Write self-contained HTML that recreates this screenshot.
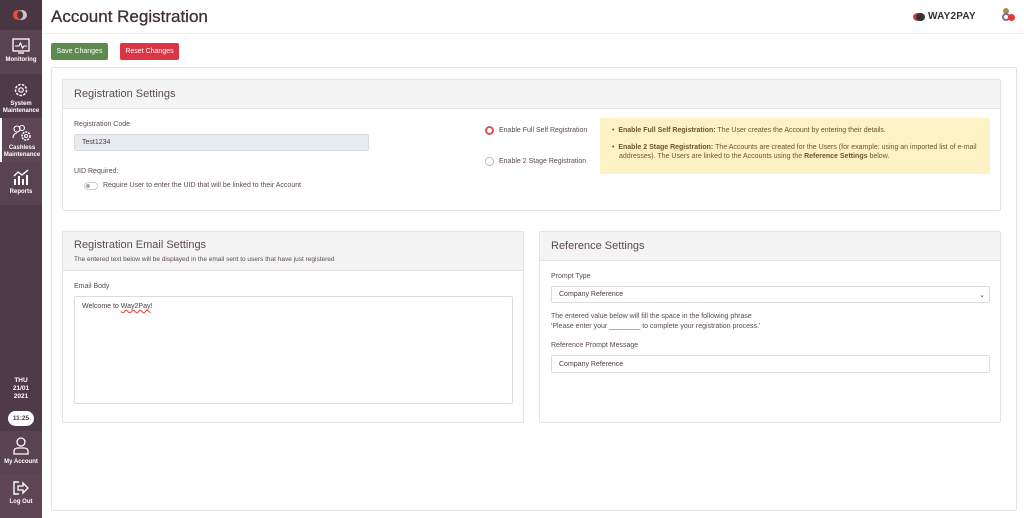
<!DOCTYPE html>
<html><head><style>
*{box-sizing:border-box;margin:0;padding:0}
body{width:1024px;height:518px;overflow:hidden;background:#fff;font-family:"Liberation Sans",sans-serif;color:#5a4a52;position:relative}
.sb{position:absolute;left:0;top:0;width:42px;height:518px;background:#4f3a47}
.it{position:absolute;left:0;width:42px;text-align:center;color:#fff;font-size:6px;font-weight:bold;line-height:7px}
.it svg{display:block;margin:0 auto 3px}
.abs{position:absolute}
.card{position:absolute;border:1px solid #e3e3e3;border-radius:2px;background:#fff}
.ch{background:#f4f4f4;border-bottom:1px solid #e3e3e3;padding:0 11px}
.ch h2{font-size:11px;font-weight:normal;color:#5a4a52}
.lbl{position:absolute;font-size:7px;color:#5a4a52}
.inp{position:absolute;border:1px solid #dcdcdc;border-radius:2px;font-size:7px;padding-left:7px;display:flex;align-items:center;color:#4a3a42}
</style></head><body>
<div class="sb">
 <div class="abs" style="left:0;top:0;width:42px;height:30px;background:#4a3542"></div>
 <div class="abs" style="left:13px;top:10px;width:14px;height:10px;">
  <div class="abs" style="left:0;top:0;width:10px;height:10px;border-radius:50%;background:#e8503a"></div>
  <div class="abs" style="left:4px;top:0;width:10px;height:10px;border-radius:50%;background:#ddd;opacity:.85"></div>
  <div class="abs" style="left:4px;top:1px;width:6px;height:8px;border-radius:50%;background:#4a3542"></div>
 </div>
 <div class="it" style="top:30px;height:44px;background:#5a4350;padding-top:8px"><svg width="18" height="16" viewBox="0 0 18 16"><rect x="1" y="1" width="16" height="12" fill="none" stroke="#fff" stroke-width="1.3"/><path d="M3 8h4l1.5-3 2 5 1.5-2H15" fill="none" stroke="#fff" stroke-width="1.1"/><path d="M6 15h6" stroke="#fff" stroke-width="1.3"/></svg>Monitoring</div>
 <div class="it" style="top:74px;height:44px;background:#4f3a47;padding-top:8px"><svg width="16" height="16" viewBox="0 0 16 16"><circle cx="8" cy="8" r="5.5" fill="none" stroke="#fff" stroke-width="1.5" stroke-dasharray="2.5 1.3"/><circle cx="8" cy="8" r="2.2" fill="none" stroke="#fff" stroke-width="1.2"/></svg>System<br>Maintenance</div>
 <div class="it" style="top:118px;height:44px;background:#5e4654;padding-top:6px;border-left:2px solid #fff"><svg width="20" height="18" viewBox="0 0 20 18"><circle cx="5" cy="5" r="3" fill="none" stroke="#fff" stroke-width="1.1"/><circle cx="10" cy="4" r="2.5" fill="none" stroke="#fff" stroke-width="1.1"/><circle cx="14" cy="12" r="4" fill="none" stroke="#fff" stroke-width="1.5" stroke-dasharray="2 1"/><circle cx="14" cy="12" r="1.5" fill="none" stroke="#fff"/><path d="M1 14c0-3 2-5 4-5" fill="none" stroke="#fff" stroke-width="1.1"/></svg>Cashless<br>Maintenance</div>
 <div class="it" style="top:162px;height:43px;background:#5a4350;padding-top:6px"><svg width="18" height="18" viewBox="0 0 18 18"><path d="M2 8l4-4 4 3 6-5" fill="none" stroke="#fff" stroke-width="1.4"/><rect x="2" y="11" width="2" height="6" fill="#fff"/><rect x="6" y="8" width="2" height="9" fill="#fff"/><rect x="10" y="11" width="2" height="6" fill="#fff"/><rect x="14" y="7" width="2" height="10" fill="#fff"/></svg>Reports</div>
 <div class="it" style="top:377px;font-size:6.5px;line-height:8px">THU<br>21/01<br>2021</div>
 <div class="abs" style="left:8px;top:411px;width:26px;height:15px;background:#fff;border-radius:8px;font-size:6.5px;font-weight:bold;color:#4a3542;text-align:center;line-height:15px">11:25</div>
 <div class="it" style="top:431px;height:42px;background:#5a4350;padding-top:5px"><svg width="18" height="20" viewBox="0 0 18 20"><circle cx="9" cy="6" r="4" fill="none" stroke="#fff" stroke-width="1.3"/><path d="M2 18v-3c0-2 2-3 4-3h6c2 0 4 1 4 3v3z" fill="none" stroke="#fff" stroke-width="1.3"/></svg>My Account</div>
 <div class="it" style="top:473px;height:45px;background:#5e4654;padding-top:7px"><svg width="18" height="16" viewBox="0 0 18 16"><path d="M7 2H2v12h5" fill="none" stroke="#fff" stroke-width="1.4"/><path d="M6 6h5V3l5 5-5 5v-3H6z" fill="none" stroke="#fff" stroke-width="1.3"/></svg>Log Out</div>
</div>

<div class="abs" style="left:51px;top:7px;font-size:17px;color:#3f3038;-webkit-text-stroke:0.3px #3f3038">Account Registration</div>
<div class="abs" style="left:42px;top:33px;width:982px;border-top:1px solid #f0f0f0"></div>
<div class="abs" style="left:913px;top:13px;width:10px;height:8px;border-radius:50%;background:#d33"></div>
<div class="abs" style="left:916px;top:13px;width:9px;height:8px;border-radius:50%;background:#333"></div>
<div class="abs" style="left:928px;top:11px;font-size:10px;font-weight:bold;color:#333;letter-spacing:.2px">WAY2PAY</div>
<div class="abs" style="left:1003px;top:8px;width:6px;height:6px;border-radius:50%;background:#a85"></div>
<div class="abs" style="left:1002px;top:13px;width:8px;height:8px;border-radius:50%;border:2px solid #8a6a9a"></div>
<div class="abs" style="left:1008px;top:14px;width:7px;height:7px;border-radius:50%;background:#e33"></div>

<div class="abs" style="left:51px;top:43px;width:57px;height:17px;background:#5f8a4f;border-radius:2px;color:#fff;font-size:7px;text-align:center;line-height:17px">Save Changes</div>
<div class="abs" style="left:120px;top:43px;width:59px;height:17px;background:#dc3545;border-radius:2px;color:#fff;font-size:7px;text-align:center;line-height:17px">Reset Changes</div>

<div class="card" style="left:51px;top:67px;width:966px;height:444px"></div>

<div class="card" style="left:62px;top:79px;width:939px;height:132px">
 <div class="ch" style="height:29px;padding-top:8px"><h2>Registration Settings</h2></div>
 <div class="lbl" style="left:11px;top:41px">Registration Code</div>
 <div class="inp" style="left:11px;top:54px;width:295px;height:17px;background:#e9ecef">Test1234</div>
 <div class="lbl" style="left:11px;top:88px">UID Required:</div>
 <div class="abs" style="left:21px;top:102px;width:14px;height:8px;border:1px solid #ccc;border-radius:4px"><div style="position:absolute;left:1px;top:1px;width:4px;height:4px;border-radius:50%;background:#aaa"></div></div>
 <div class="lbl" style="left:40px;top:102px">Require User to enter the UID that will be linked to their Account</div>
 <div class="abs" style="left:422px;top:46px;width:9px;height:9px;border-radius:50%;border:2.5px solid #e0505a;background:#fff"></div>
 <div class="lbl" style="left:436px;top:47px">Enable Full Self Registration</div>
 <div class="abs" style="left:422px;top:77px;width:9px;height:9px;border-radius:50%;border:1px solid #bbb"></div>
 <div class="lbl" style="left:436px;top:78px">Enable 2 Stage Registration</div>
 <div class="abs" style="left:537px;top:38px;width:390px;height:56px;background:#fdf1c6;border-radius:2px;font-size:7px;color:#6a5530;line-height:9px;padding:8px 6px 0 12px">
  <div>• &nbsp;<b>Enable Full Self Registration:</b> The User creates the Account by entering their details.</div>
  <div style="margin-top:8px;padding-left:7px;text-indent:-7px">• &nbsp;<b>Enable 2 Stage Registration:</b> The Accounts are created for the Users (for example: using an imported list of e-mail addresses). The Users are linked to the Accounts using the <b>Reference Settings</b> below.</div>
 </div>
</div>

<div class="card" style="left:62px;top:231px;width:462px;height:192px">
 <div class="ch" style="height:39px;padding-top:7px"><h2>Registration Email Settings</h2><div style="font-size:6.5px;margin-top:5px">The entered text below will be displayed in the email sent to users that have just registered</div></div>
 <div class="lbl" style="left:11px;top:51px">Email Body</div>
 <div class="inp" style="left:11px;top:64px;width:439px;height:108px;align-items:flex-start;padding-top:6px">Welcome to&nbsp;<span style="text-decoration:underline wavy #e33">Way2Pay</span>!</div>
</div>

<div class="card" style="left:539px;top:231px;width:462px;height:192px">
 <div class="ch" style="height:29px;padding-top:8px"><h2>Reference Settings</h2></div>
 <div class="lbl" style="left:11px;top:41px">Prompt Type</div>
 <div class="inp" style="left:11px;top:54px;width:439px;height:17px">Company Reference<span style="position:absolute;right:4px;font-size:7px">⌄</span></div>
 <div class="lbl" style="left:11px;top:80px;line-height:10px">The entered value below will fill the space in the following phrase<br>'Please enter your ________ to complete your registration process.'</div>
 <div class="lbl" style="left:11px;top:110px">Reference Prompt Message</div>
 <div class="inp" style="left:11px;top:123px;width:439px;height:18px">Company Reference</div>
</div>
</body></html>
